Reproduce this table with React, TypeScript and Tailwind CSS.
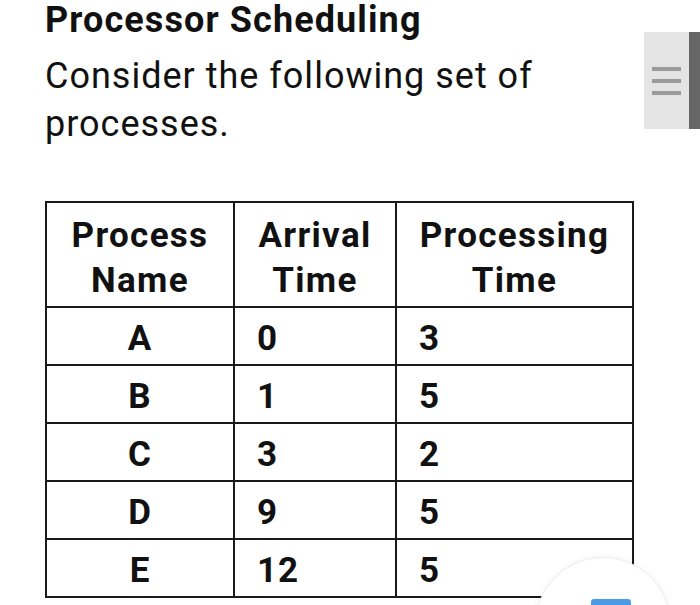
import React from "react";

const ROWS = [
    { name: "A", arrival: "0", processing: "3" },
    { name: "B", arrival: "1", processing: "5" },
    { name: "C", arrival: "3", processing: "2" },
    { name: "D", arrival: "9", processing: "5" },
    { name: "E", arrival: "12", processing: "5" },
];

export default function App() {
    return (
        <div className="relative w-[700px] h-[605px] overflow-hidden bg-white text-[#111] font-['Roboto',sans-serif]">
            <div className="pl-[45px] pt-0">
                <h1 className="text-[36px] leading-[40px] font-bold tracking-[1.1px]">Processor Scheduling</h1>
                <p className="mt-[12px] text-[36px] leading-[48px] font-normal tracking-[1px] w-[560px]">
                    Consider the following set of processes.
                </p>

                {/* Process table */}
                <table className="mt-[53px] w-[589px] border-collapse border-2 border-[#1a1a1a]">
                    <thead>
                        <tr className="h-[105px]">
                            <th className="w-[188px] border-2 border-[#1a1a1a] text-[35px] leading-[45px] font-bold tracking-[1.3px] text-center pt-[6px]">
                                Process<br />Name
                            </th>
                            <th className="w-[162px] border-2 border-[#1a1a1a] text-[35px] leading-[45px] font-bold tracking-[1.3px] text-center pt-[6px]">
                                Arrival<br />Time
                            </th>
                            <th className="border-2 border-[#1a1a1a] text-[35px] leading-[45px] font-bold tracking-[1.3px] text-center pt-[6px]">
                                Processing<br />Time
                            </th>
                        </tr>
                    </thead>
                    <tbody>
                        {ROWS.map((r) => (
                            <tr key={r.name} className="h-[58px]">
                                <td className="border-2 border-[#1a1a1a] text-[35px] leading-[42px] font-bold tracking-[1px] text-center pt-[5px]">{r.name}</td>
                                <td className="border-2 border-[#1a1a1a] text-[35px] leading-[42px] font-bold tracking-[1px] pl-[22px] pt-[5px]">{r.arrival}</td>
                                <td className="border-2 border-[#1a1a1a] text-[35px] leading-[42px] font-bold tracking-[1px] pl-[22px] pt-[5px]">{r.processing}</td>
                            </tr>
                        ))}
                    </tbody>
                </table>
            </div>

            {/* Side drawer handle */}
            <div className="absolute right-0 top-[32px] h-[97px] flex">
                <div className="w-[45px] bg-[#e4e4e4] flex flex-col items-center justify-center gap-[8px]">
                    <span className="block w-[29px] h-[4px] bg-[#9a9a9a]" />
                    <span className="block w-[29px] h-[4px] bg-[#9a9a9a]" />
                    <span className="block w-[29px] h-[4px] bg-[#9a9a9a]" />
                </div>
                <div className="w-[11px] bg-[#666]" />
            </div>

            {/* Floating action button */}
            <div className="absolute left-[535px] top-[557px] w-[136px] h-[136px] rounded-full bg-white border border-[#ededed] shadow-[0_0_6px_rgba(0,0,0,0.06)]">
                <div className="absolute left-[55px] top-[41px] w-[40px] h-[12px] rounded-[3px] bg-[#4a9be6]" />
            </div>
        </div>
    );
}
